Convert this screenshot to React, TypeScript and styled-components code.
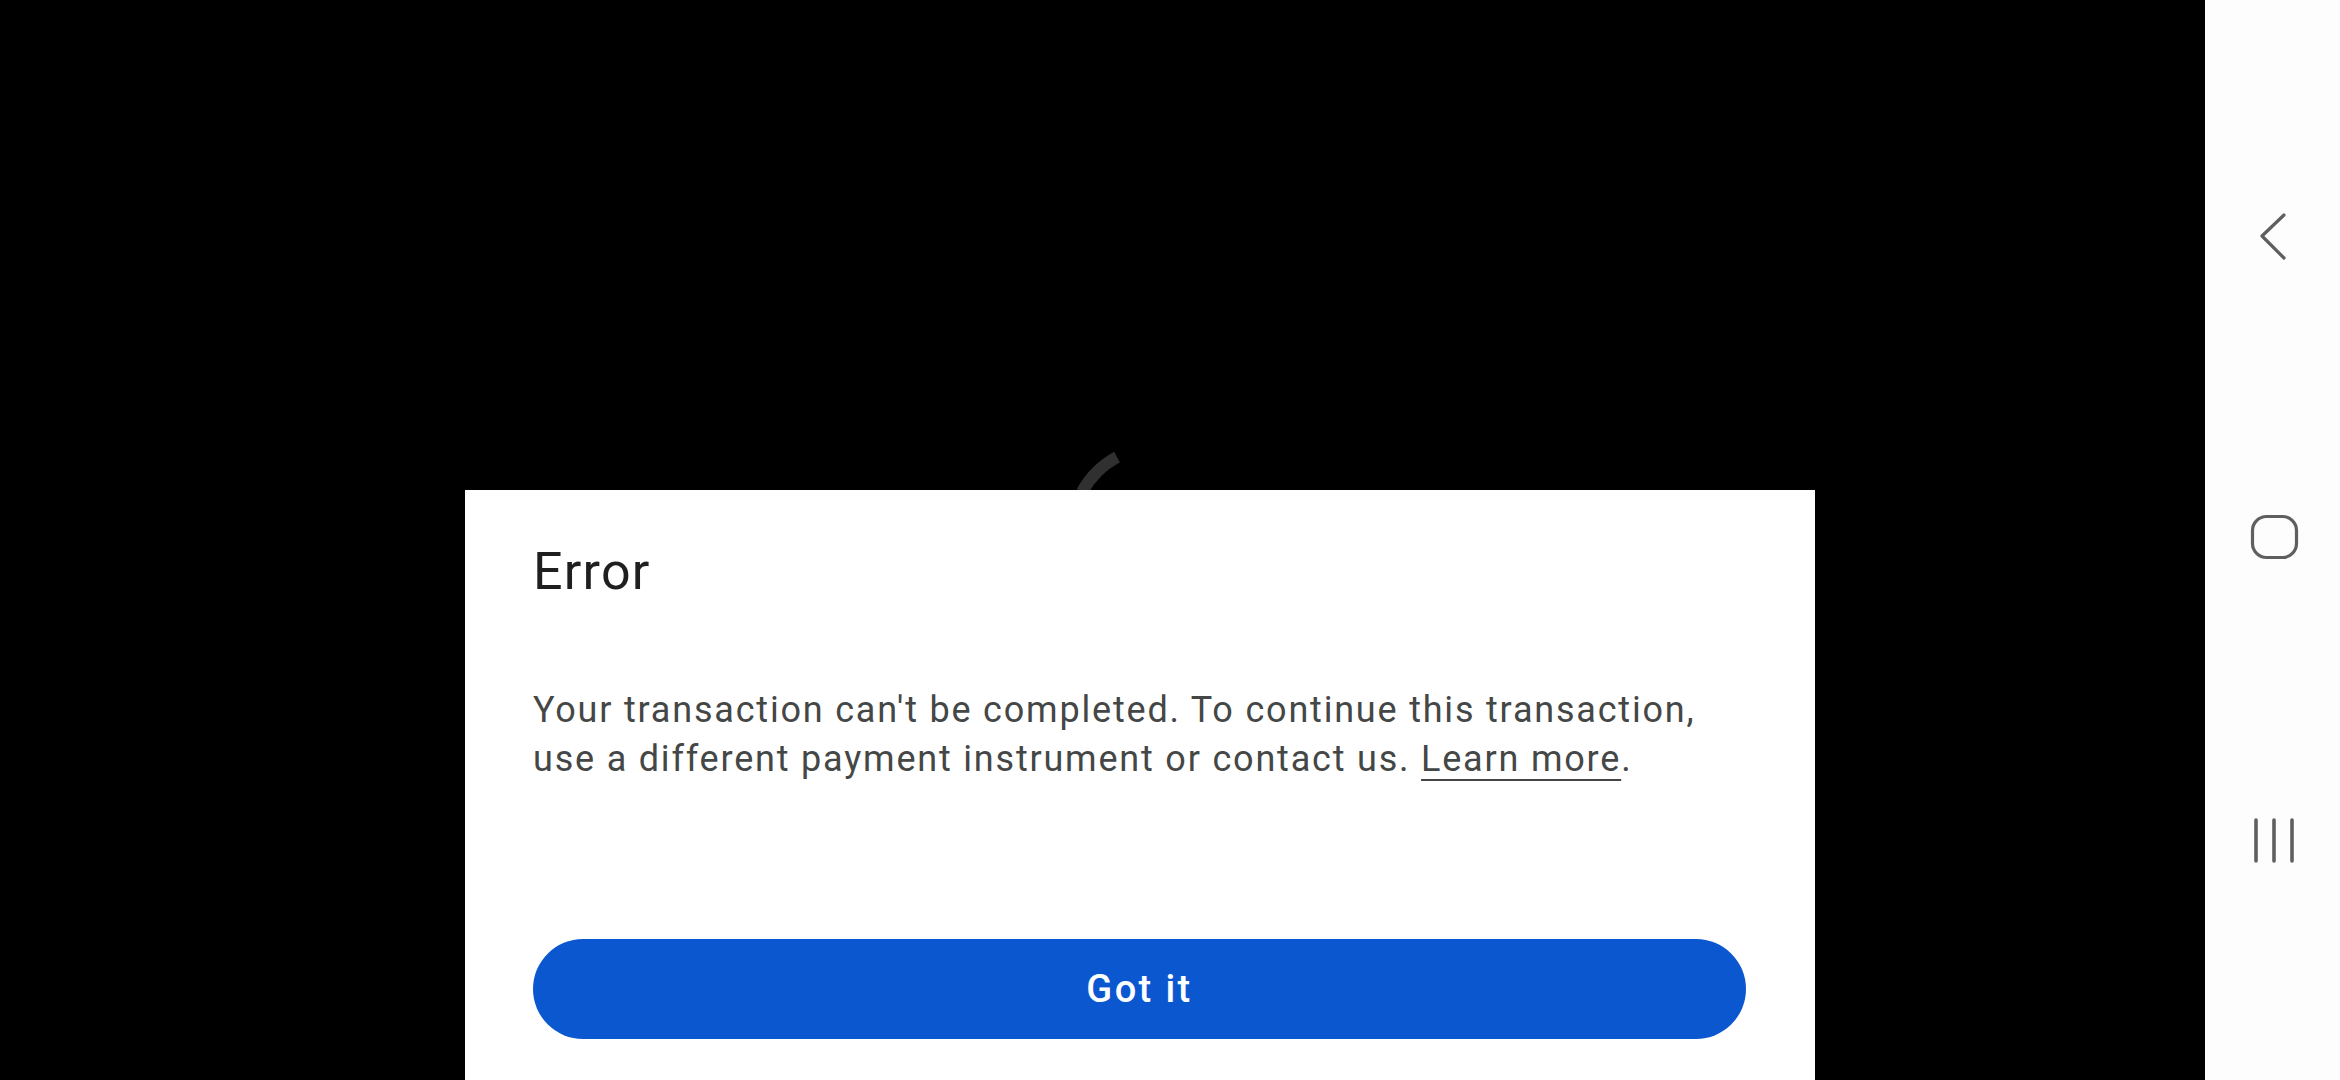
import React from 'react';
import styled, { createGlobalStyle } from 'styled-components';

const GlobalStyle = createGlobalStyle`
    html, body {
        margin:0;
        padding:0;
        width:100%;
        height:100%;
        overflow:hidden;
        background:#000;
    }
    #root {
        width:100%;
        height:100%;
    }
`

const Device = styled.div`
    display:flex;
    width:2340px;
    height:1080px;
    font-family:Roboto, "Noto Sans", sans-serif;
`

const Screen = styled.main`
    position:relative;
    flex:1;
    display:flex;
    flex-direction:column;
    justify-content:flex-end;
    background:#000;
    overflow:hidden;
`

const Spinner = styled.svg`
    position:absolute;
    left:1060px;
    top:435px;
    width:200px;
    height:200px;
`

const Dialog = styled.section`
    position:relative;
    box-sizing:border-box;
    width:1350px;
    height:590px;
    margin-left:465px;
    padding:50px 69px 0 68px;
    background:#fff;
`

const Title = styled.h2`
    margin:0;
    font-size:52px;
    line-height:64px;
    font-weight:400;
    letter-spacing:1.2px;
    color:#1f1f1f;
`

const Message = styled.p`
    max-width:1185px;
    margin:82px 0 0;
    font-size:36px;
    line-height:49px;
    letter-spacing:1.8px;
    color:#444746;
    a {
        color:inherit;
        text-decoration:underline;
        text-decoration-thickness:2px;
        text-underline-offset:8px;
    }
`

const PrimaryButton = styled.button`
    display:flex;
    align-items:center;
    justify-content:center;
    width:100%;
    height:100px;
    margin-top:155px;
    border:none;
    border-radius:50px;
    background:#0b57d0;
    color:#fff;
    font-family:inherit;
    font-size:38px;
    font-weight:500;
    letter-spacing:2.4px;
    cursor:pointer;
`

const NavBar = styled.nav`
    display:flex;
    flex-direction:column;
    align-items:center;
    justify-content:space-between;
    width:135px;
    padding:204px 0 210px;
    box-sizing:border-box;
    background:#fdfdfd;
`

const NavButton = styled.svg`
    display:block;
    width:56px;
    height:56px;
    color:#5f5f5f;
    margin-left:4px;
`

const App = () => {
    return (
        <>
            <GlobalStyle />
            <Device>
                <Screen>
                    <Spinner viewBox="0 0 200 200">
                        <path
                            d="M 57 22 A 88 88 0 0 0 22 57"
                            fill="none"
                            stroke="#303030"
                            strokeWidth="12"
                        />
                    </Spinner>
                    <Dialog>
                        <Title>Error</Title>
                        <Message>
                            Your transaction can't be completed. To continue this transaction, use a different payment instrument or contact us. <a href="#">Learn more</a>.
                        </Message>
                        <PrimaryButton>Got it</PrimaryButton>
                    </Dialog>
                </Screen>
                <NavBar>
                    <NavButton viewBox="0 0 56 56">
                        <path d="M37 11 L15 32 L37 54" fill="none" stroke="currentColor" strokeWidth="3.2" strokeLinecap="round" strokeLinejoin="round" />
                    </NavButton>
                    <NavButton viewBox="0 0 56 56">
                        <rect x="5.5" y="7.5" width="44" height="41" rx="14" fill="none" stroke="currentColor" strokeWidth="3.2" />
                    </NavButton>
                    <NavButton viewBox="0 0 56 56">
                        <path d="M9 6 V47 M27 6 V47 M45 6 V47" fill="none" stroke="currentColor" strokeWidth="3.6" strokeLinecap="round" />
                    </NavButton>
                </NavBar>
            </Device>
        </>
    )
}

export default App;
